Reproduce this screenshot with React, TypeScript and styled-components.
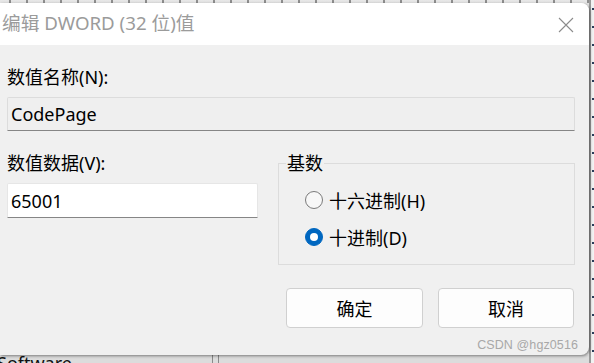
import React from "react";
import styled, { createGlobalStyle } from "styled-components";

const GlobalStyle = createGlobalStyle`
  html, body { margin: 0; padding: 0; }
  body {
    background: #e6e6e6;
    font-family: "Noto Sans", "Noto Sans CJK SC", sans-serif;
  }
  * { box-sizing: border-box; }
`;

const Screen = styled.div`
  position: relative;
  width: 594px;
  height: 363px;
  overflow: hidden;
  background: #e4e4e4;
  display: grid;
  grid-template-columns: 589px 1fr;
  grid-template-rows: 3px 352px 1fr;
`;

const TopStrip = styled.div`
  grid-column: 1 / 2;
  grid-row: 1;
  background: repeating-linear-gradient(90deg, #e8e8e8 0 9px, #555 9px 11px, #e8e8e8 11px 17px);
  opacity: 0.6;
`;

const RightStrip = styled.div`
  grid-column: 2;
  grid-row: 1 / 4;
  border-left: 2px solid #9a9a9a;
  background: repeating-linear-gradient(180deg, #f2f2f2 0 14px, #2a3d5a 14px 16px, #f2f2f2 16px 18px);
  background-size: 3px 18px;
  background-repeat: repeat-y;
  background-position: 1px 30px;
  background-color: #f2f2f2;
`;

const BottomStrip = styled.div`
  grid-column: 1;
  grid-row: 3;
  background: #dcdcdc;
  display: flex;
  align-items: flex-start;
`;

const BgCell = styled.div<{ $w: number }>`
  width: ${(p) => p.$w}px;
  height: 100%;
  border-right: 1px solid #8a8a8a;
  overflow: hidden;
  font-family: "Noto Sans", sans-serif;
  font-size: 18px;
  line-height: 14px;
  color: #111;
  padding-top: 1px;
  margin-left: ${(p) => (p.$w > 100 ? -3 : 0)}px;
`;

const Dialog = styled.div`
  grid-column: 1;
  grid-row: 2;
  display: flex;
  flex-direction: column;
  background: #f0f0f0;
  border-radius: 0 8px 8px 0;
  box-shadow: 1px 1px 3px rgba(0, 0, 0, 0.45);
  overflow: hidden;
  z-index: 1;
`;

const TitleBar = styled.div`
  height: 42px;
  flex: none;
  background: #ffffff;
  display: flex;
  align-items: center;
  justify-content: space-between;
  padding: 0 15px 0 2px;
`;

const TitleText = styled.div`
  font-size: 18.7px;
  color: #9b9b9b;
  line-height: 24px;
  margin-top: -2px;
`;

const CloseBtn = styled.div`
  width: 16px;
  height: 16px;
  display: flex;
  margin-top: 2px;
`;

const Body = styled.div`
  flex: 1;
  display: flex;
  flex-direction: column;
  padding: 20px 14px 0 7px;
`;

const Label = styled.div`
  font-size: 18px;
  line-height: 24px;
  height: 24px;
  color: #000;
`;

const Field = styled.div<{ $readonly?: boolean }>`
  margin-top: 8px;
  height: ${(p) => (p.$readonly ? 34 : 35)}px;
  display: flex;
  align-items: center;
  padding-left: 3px;
  font-size: 18px;
  color: #000;
  background: ${(p) => (p.$readonly ? "#efefef" : "#ffffff")};
  border: 1px solid ${(p) => (p.$readonly ? "#dcdcdc" : "#e6e6e6")};
  border-bottom: 1px solid #868686;
  border-radius: 2px 2px 0 0;
`;

const Row = styled.div`
  margin-top: 20px;
  display: grid;
  grid-template-columns: 251px 297px;
  column-gap: 20px;
`;

const Col = styled.div`
  display: flex;
  flex-direction: column;
`;

const Group = styled.fieldset`
  margin: 0;
  padding: 13px 0 15px 26px;
  border: 1px solid #dcdcdc;
  display: flex;
  flex-direction: column;
  gap: 13px;
  min-width: 0;
`;

const Legend = styled.legend`
  font-size: 18px;
  line-height: 24px;
  padding: 0 1px;
  margin-left: -19px;
  color: #000;
`;

const RadioRow = styled.div`
  display: flex;
  align-items: center;
  height: 24px;
  gap: 6px;
  font-size: 18px;
  color: #000;
`;

const RadioDot = styled.span<{ $checked?: boolean }>`
  width: 18px;
  height: 18px;
  border-radius: 50%;
  flex: none;
  display: flex;
  align-items: center;
  justify-content: center;
  background: ${(p) => (p.$checked ? "#0067c0" : "#f7f7f7")};
  border: 1px solid ${(p) => (p.$checked ? "#0067c0" : "#7a7a7a")};
  &::after {
    content: "";
    width: 8px;
    height: 8px;
    border-radius: 50%;
    background: #ffffff;
    display: ${(p) => (p.$checked ? "block" : "none")};
  }
`;

const Buttons = styled.div`
  margin-top: 23px;
  display: flex;
  justify-content: flex-end;
  gap: 15px;
  padding-right: 1px;
`;

const Button = styled.button<{ $w: number }>`
  width: ${(p) => p.$w}px;
  height: 40px;
  background: #fdfdfd;
  border: 1px solid #d0d0d0;
  border-radius: 4px;
  font-family: "Noto Sans CJK SC", "Noto Sans", sans-serif;
  font-size: 18px;
  color: #000;
  padding: 0;
`;

const Watermark = styled.div`
  position: absolute;
  right: 16px;
  bottom: 11px;
  font-family: "Liberation Sans", sans-serif;
  font-size: 12.5px;
  line-height: 14px;
  color: #a8a8a8;
  z-index: 2;
  letter-spacing: 0.1px;
`;

const CloseIcon = () => (
  <svg width="16" height="16" viewBox="0 0 16 16">
    <path d="M1 1 L15 15 M15 1 L1 15" stroke="#8c8c8c" strokeWidth="1.1" fill="none" />
  </svg>
);

export default function App() {
  return (
    <>
      <GlobalStyle />
      <Screen>
        <TopStrip />
        <Dialog>
          <TitleBar>
            <TitleText>编辑 DWORD (32 位)值</TitleText>
            <CloseBtn>
              <CloseIcon />
            </CloseBtn>
          </TitleBar>
          <Body>
            <Label>数值名称(N):</Label>
            <Field $readonly>CodePage</Field>
            <Row>
              <Col>
                <Label>数值数据(V):</Label>
                <Field>65001</Field>
              </Col>
              <Group>
                <Legend>基数</Legend>
                <RadioRow>
                  <RadioDot />
                  十六进制(H)
                </RadioRow>
                <RadioRow>
                  <RadioDot $checked />
                  十进制(D)
                </RadioRow>
              </Group>
            </Row>
            <Buttons>
              <Button $w={137}>确定</Button>
              <Button $w={136}>取消</Button>
            </Buttons>
          </Body>
        </Dialog>
        <RightStrip />
        <BottomStrip>
          <BgCell $w={216}>Software</BgCell>
          <BgCell $w={6} />
        </BottomStrip>
        <Watermark>CSDN @hgz0516</Watermark>
      </Screen>
    </>
  );
}
